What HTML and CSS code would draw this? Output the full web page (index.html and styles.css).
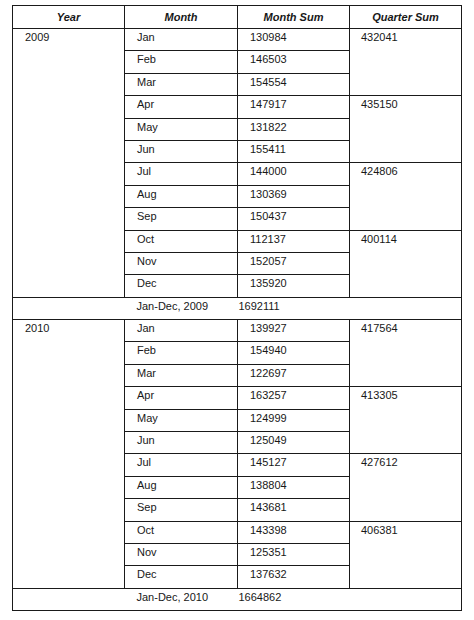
FILE: index.html
```html
<!DOCTYPE html>
<html>
<head>
<meta charset="utf-8">
<link rel="stylesheet" href="styles.css">
</head>
<body>
<table class="report">
  <colgroup>
    <col class="c-year"><col class="c-month"><col class="c-sum"><col class="c-qtr">
  </colgroup>
  <thead>
    <tr class="head"><th>Year</th><th>Month</th><th>Month Sum</th><th>Quarter Sum</th></tr>
  </thead>
  <tbody>
    <tr><td class="year" rowspan="12">2009</td><td class="m">Jan</td><td class="s">130984</td><td class="q" rowspan="3">432041</td></tr>
    <tr><td class="m">Feb</td><td class="s">146503</td></tr>
    <tr><td class="m">Mar</td><td class="s">154554</td></tr>
    <tr><td class="m">Apr</td><td class="s">147917</td><td class="q" rowspan="3">435150</td></tr>
    <tr><td class="m">May</td><td class="s">131822</td></tr>
    <tr><td class="m">Jun</td><td class="s">155411</td></tr>
    <tr><td class="m">Jul</td><td class="s">144000</td><td class="q" rowspan="3">424806</td></tr>
    <tr><td class="m">Aug</td><td class="s">130369</td></tr>
    <tr><td class="m">Sep</td><td class="s">150437</td></tr>
    <tr><td class="m">Oct</td><td class="s">112137</td><td class="q" rowspan="3">400114</td></tr>
    <tr><td class="m">Nov</td><td class="s">152057</td></tr>
    <tr><td class="m">Dec</td><td class="s">135920</td></tr>
    <tr class="total"><td class="t-blank"></td><td class="t-label">Jan-Dec, 2009</td><td class="t-sum">1692111</td><td class="t-end"></td></tr>

    <tr><td class="year" rowspan="12">2010</td><td class="m">Jan</td><td class="s">139927</td><td class="q" rowspan="3">417564</td></tr>
    <tr><td class="m">Feb</td><td class="s">154940</td></tr>
    <tr><td class="m">Mar</td><td class="s">122697</td></tr>
    <tr><td class="m">Apr</td><td class="s">163257</td><td class="q" rowspan="3">413305</td></tr>
    <tr><td class="m">May</td><td class="s">124999</td></tr>
    <tr><td class="m">Jun</td><td class="s">125049</td></tr>
    <tr><td class="m">Jul</td><td class="s">145127</td><td class="q" rowspan="3">427612</td></tr>
    <tr><td class="m">Aug</td><td class="s">138804</td></tr>
    <tr><td class="m">Sep</td><td class="s">143681</td></tr>
    <tr><td class="m">Oct</td><td class="s">143398</td><td class="q" rowspan="3">406381</td></tr>
    <tr><td class="m">Nov</td><td class="s">125351</td></tr>
    <tr><td class="m">Dec</td><td class="s">137632</td></tr>
    <tr class="total"><td class="t-blank"></td><td class="t-label">Jan-Dec, 2010</td><td class="t-sum">1664862</td><td class="t-end"></td></tr>
  </tbody>
</table>
</body>
</html>
```

FILE: styles.css
```css
html, body {
  background: #ffffff;
}
body {
  margin: 5px 0 0 12px;
  font-family: "Liberation Sans", Arial, sans-serif;
  font-size: 11px;
  color: #181818;
}
.report {
  border-collapse: collapse;
  table-layout: fixed;
  width: 450px;
  border: 1px solid #1a1a1a;
}
.c-year { width: 112px; }
.c-month { width: 113px; }
.c-sum { width: 112px; }
.c-qtr { width: 112px; }

.report th,
.report td {
  border: 1px solid #1a1a1a;
  padding: 0;
  line-height: 13px;
}
.head {
  height: 23px;
}
.head th {
  font-weight: bold;
  font-style: italic;
  text-align: center;
  vertical-align: middle;
}
.report tbody tr {
  height: 22.4px;
}
.report td {
  vertical-align: top;
  text-align: left;
  padding: 2px 0 0 12px;
}
.report td.q {
  padding-left: 11px;
}
.total td {
  border-left: none;
  border-right: none;
}
.total td.t-blank {
  border-left: 1px solid #1a1a1a;
}
.total td.t-end {
  border-right: 1px solid #1a1a1a;
}
.total td.t-sum {
  padding-left: 1px;
}
```
